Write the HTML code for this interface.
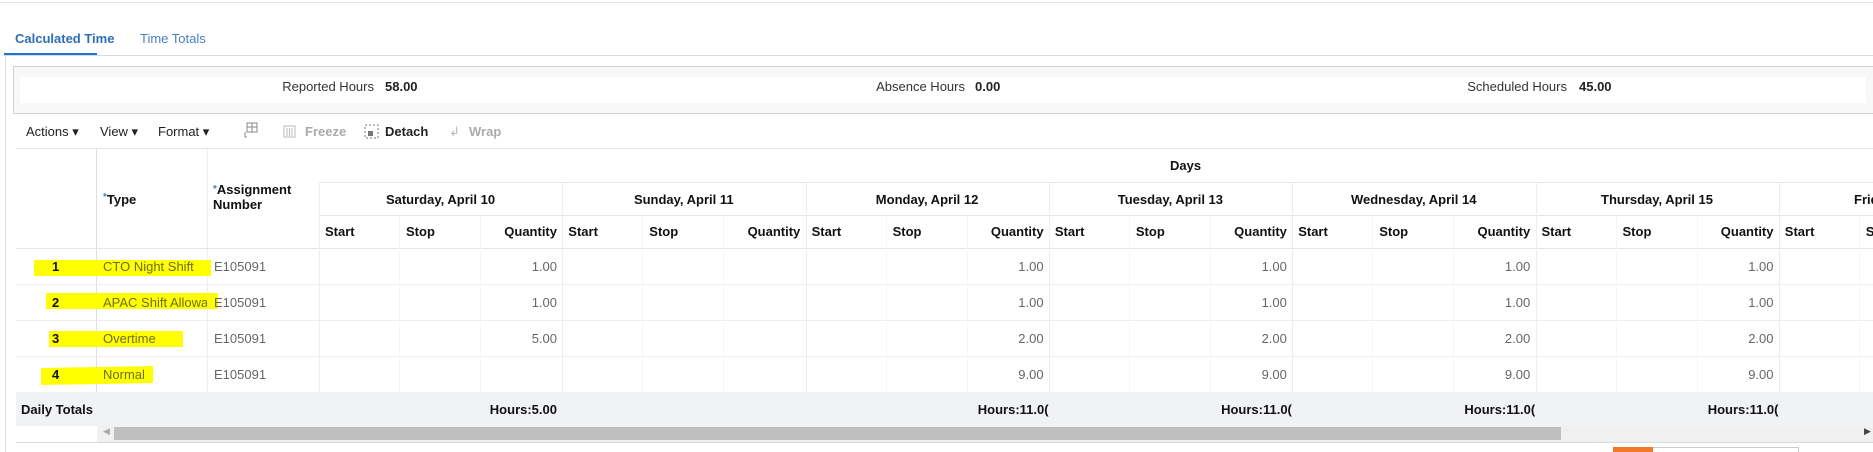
<!DOCTYPE html>
<html style="overflow:hidden"><head><meta charset="utf-8"><style>
body{margin:0;width:1873px;height:452px;overflow:hidden;background:#fff;font-family:"Liberation Sans",Arial,sans-serif;position:relative}
div,span{position:absolute;box-sizing:border-box}
.t{white-space:nowrap;font-size:13px}
.b{font-weight:bold;color:#111}
.h{background:#ffff00}
.g{color:#666}
.hl{height:1px;background:#e3e6ea}
.vl{width:1px;background:#eceef0}
</style></head><body>
<div class="hl" style="left:0;top:2px;width:1873px;background:#dfe2e5"></div>
<div class="t" style="left:15px;top:31px;font-size:13px;color:#2d6fb6;font-weight:bold">Calculated Time</div>
<div class="t" style="left:140px;top:31px;font-size:13px;color:#4a7fc0">Time Totals</div>
<div style="left:4px;top:53px;width:93px;height:3px;background:#1f74cf"></div>
<div class="hl" style="left:4px;top:55px;width:1869px;background:#d6dbe0"></div>
<div class="vl" style="left:5px;top:55px;height:397px;background:#dde1e5"></div>
<div style="left:13px;top:66px;width:1870px;height:48px;border:1px solid #d0d3d6;background:#f8f8f8"></div>
<div style="left:20px;top:77px;width:1846px;height:26px;background:#fff"></div>
<div class="t" style="left:220px;top:79px;width:154px;text-align:right;font-size:13px;color:#333">Reported Hours</div>
<div class="t b" style="left:385px;top:79px;color:#222">58.00</div>
<div class="t" style="left:800px;top:79px;width:165px;text-align:right;color:#333">Absence Hours</div>
<div class="t b" style="left:975px;top:79px;color:#222">0.00</div>
<div class="t" style="left:1400px;top:79px;width:167px;text-align:right;color:#333">Scheduled Hours</div>
<div class="t b" style="left:1579px;top:79px;color:#222">45.00</div>
<div class="t" style="left:26px;top:124px;color:#222">Actions ▾</div>
<div class="t" style="left:100px;top:124px;color:#222">View ▾</div>
<div class="t" style="left:158px;top:124px;color:#222">Format ▾</div>
<svg style="position:absolute;left:243px;top:122px" width="16" height="16"><rect x="4" y="1" width="10" height="9" fill="none" stroke="#888"/><path d="M4 5h10M9 1v9M2 10v5h2" stroke="#888" fill="none"/></svg>
<svg style="position:absolute;left:283px;top:125px" width="14" height="14"><rect x="1" y="1" width="11" height="11" fill="none" stroke="#bbb"/><path d="M4 3v8M6.5 3v8M9 3v8" stroke="#bbb"/></svg>
<div class="t" style="left:305px;top:124px;color:#aaa;font-weight:bold">Freeze</div>
<svg style="position:absolute;left:364px;top:124px" width="15" height="15"><rect x="1" y="1" width="13" height="13" fill="none" stroke="#777" stroke-dasharray="2 2"/><rect x="4" y="7" width="5" height="5" fill="#777"/></svg>
<div class="t" style="left:385px;top:124px;color:#222;font-weight:bold">Detach</div>
<div class="t" style="left:449px;top:124px;color:#bbb">↲</div>
<div class="t" style="left:469px;top:124px;color:#aaa;font-weight:bold">Wrap</div>
<div style="left:16px;top:392px;width:1857px;height:34px;background:#f1f2f5"></div>
<div class="hl" style="left:16px;top:148px;width:1857px"></div>
<div class="vl" style="left:96px;top:149px;height:243px;background:#dde1e5"></div>
<div class="vl" style="left:207px;top:149px;height:243px"></div>
<div class="hl" style="left:319px;top:182px;width:1554px"></div>
<div class="hl" style="left:319px;top:215px;width:1554px"></div>
<div class="hl" style="left:16px;top:248px;width:1857px"></div>
<div class="hl" style="left:16px;top:284px;width:1857px;background:#eceef0"></div>
<div class="hl" style="left:16px;top:320px;width:1857px;background:#eceef0"></div>
<div class="hl" style="left:16px;top:356px;width:1857px;background:#eceef0"></div>
<div class="t b" style="left:1170px;top:158px">Days</div>
<div class="t b" style="left:103px;top:192px"><span style="position:static;color:#3a7fc8;font-size:10px;vertical-align:top">*</span>Type</div>
<div class="t b" style="left:213px;top:182px;line-height:15px"><span style="position:static;color:#3a7fc8;font-size:10px;vertical-align:top">*</span>Assignment<br>Number</div>
<div id="days"></div>
<div class="h" style="left:34px;top:260px;width:177px;height:16px"></div>
<div class="h" style="left:46px;top:293px;width:172px;height:16px"></div>
<div class="h" style="left:49px;top:331px;width:134px;height:16px"></div>
<div class="h" style="left:41px;top:367px;width:112px;height:17px;transform:skewY(-1deg)"></div>
<div class="t b" style="left:52px;top:259px">1</div>
<div class="t b" style="left:52px;top:295px">2</div>
<div class="t b" style="left:52px;top:331px">3</div>
<div class="t b" style="left:52px;top:367px">4</div>
<div class="t" style="left:103px;top:259px;color:#6d6d20;width:103px;overflow:hidden">CTO Night Shift</div>
<div class="t" style="left:103px;top:295px;color:#6d6d20;width:104px;overflow:hidden">APAC Shift Allowance</div>
<div class="t" style="left:103px;top:331px;color:#6d6d20">Overtime</div>
<div class="t" style="left:103px;top:367px;color:#6d6d20">Normal</div>
<div class="t g" style="left:214px;top:259px">E105091</div>
<div class="t g" style="left:214px;top:295px">E105091</div>
<div class="t g" style="left:214px;top:331px">E105091</div>
<div class="t g" style="left:214px;top:367px">E105091</div>
<div class="t b" style="left:21px;top:402px">Daily Totals</div>
<div style="left:97px;top:426px;width:1776px;height:16px;background:#f0f0f0"></div>
<div style="left:114px;top:427px;width:1447px;height:13px;background:#bfbfbf"></div>
<div class="t" style="left:103px;top:426px;font-size:9px;color:#aaa">◀</div>
<div class="t" style="left:1864px;top:426px;font-size:9px;color:#444">▶</div>
<div class="hl" style="left:16px;top:442px;width:1857px;background:#d6dbe0"></div>
<div style="left:1613px;top:447px;width:186px;height:5px;border:1px solid #ccc;border-bottom:none"></div>
<div style="left:1613px;top:447px;width:40px;height:5px;background:#f07a2a"></div>
<script>
var names=["Saturday, April 10","Sunday, April 11","Monday, April 12","Tuesday, April 13","Wednesday, April 14","Thursday, April 15","Friday, April 16"];
var q=[["1.00","1.00","5.00",""],["","","",""],["1.00","1.00","2.00","9.00"],["1.00","1.00","2.00","9.00"],["1.00","1.00","2.00","9.00"],["1.00","1.00","2.00","9.00"],["","","",""]];
var tot=["Hours:5.00","","Hours:11.0(","Hours:11.0(","Hours:11.0(","Hours:11.0(",""];
var h="";
for(var i=0;i<7;i++){var x=319+i*243.3;
h+='<div class="vl" style="left:'+x+'px;top:182px;height:210px"></div>';
h+='<div class="vl" style="left:'+(x+80)+'px;top:215px;height:177px;background:#f5f6f7"></div>';
h+='<div class="vl" style="left:'+(x+161)+'px;top:215px;height:177px;background:#f5f6f7"></div>';
h+='<div class="t b" style="left:'+x+'px;top:192px;width:243px;text-align:center">'+names[i]+'</div>';
h+='<div class="t b" style="left:'+(x+6)+'px;top:224px">Start</div>';
h+='<div class="t b" style="left:'+(x+87)+'px;top:224px">Stop</div>';
h+='<div class="t b" style="left:'+(x+161)+'px;top:224px;width:77px;text-align:right;overflow:hidden">Quantity</div>';
for(var r=0;r<4;r++)h+='<div class="t g" style="left:'+(x+161)+'px;top:'+(259+36*r)+'px;width:77px;text-align:right">'+q[i][r]+'</div>';
if(tot[i])h+='<div class="t b" style="left:'+(x+150)+'px;top:402px;width:93px;overflow:hidden;text-align:right;padding-right:'+(i==0?5:0)+'px">'+tot[i]+'</div>';}
document.getElementById('days').outerHTML=h;
</script>
</body></html>
